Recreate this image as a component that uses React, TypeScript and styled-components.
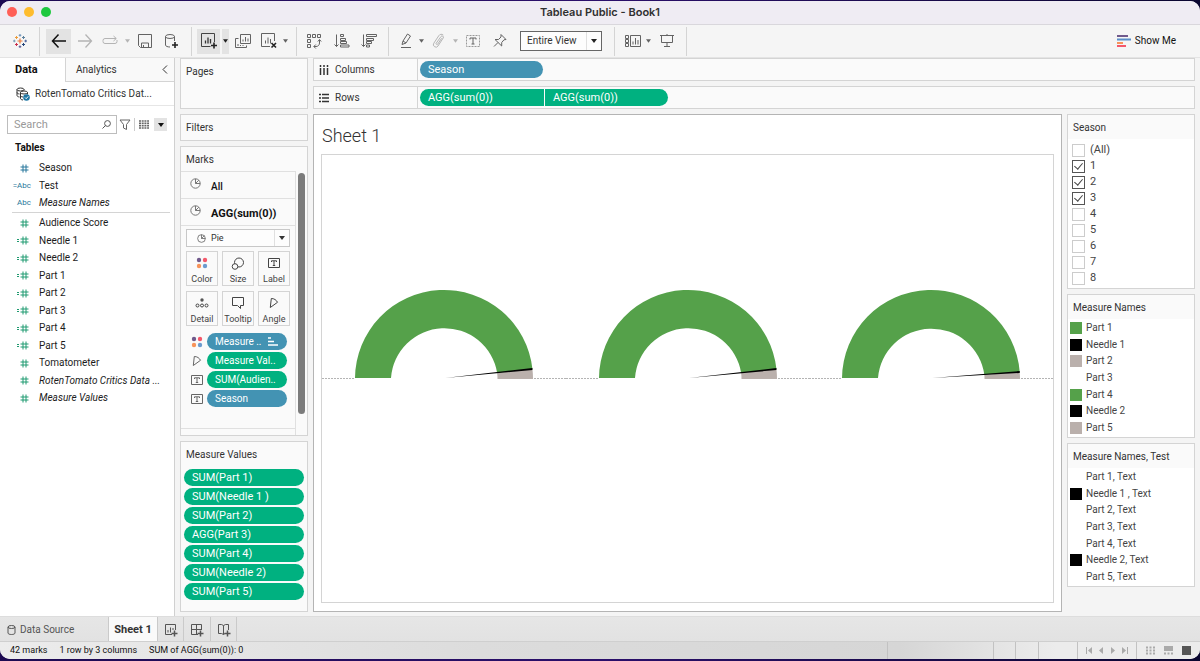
import React from "react";
import styled, { createGlobalStyle, css } from "styled-components";

const color = {
  ink: "#333",
  line: "#d4d4d4",
  card: "#fafafa",
  work: "#f4f4f4",
  blue: "#4393b3",
  green: "#00b180",
  part: "#55a14a",
  taupe: "#bab0ac",
};

const GlobalStyle = createGlobalStyle`
  * { box-sizing: border-box; }
  body {
    margin: 0;
    background: linear-gradient(90deg, #1d0a52, #2b0f6b 50%, #0a0630);
    color: ${color.ink};
    font: 10px/16px Roboto, "Liberation Sans", sans-serif;
  }
  button, input, select { font: inherit; color: inherit; }
  button { padding: 0; border: 0; background: none; }
  h1, h2, ul { margin: 0; padding: 0; font-weight: 400; font-size: inherit; }
  ul { list-style: none; }
  svg { display: block; flex: none; }
`;

const Window = styled.div`
  display: flex;
  flex-direction: column;
  min-height: calc(100vh - 3px);
  margin: 1px 0 2px;
  border-radius: 10px;
  overflow: hidden;
  background: ${color.work};
`;

const TitleBar = styled.header`
  display: grid;
  grid-template-columns: 1fr auto 1fr;
  align-items: center;
  height: 24px;
  padding: 0 7px 1px;
  background: #efecf3;
  border-bottom: 1px solid #d9d7dc;
  h1 {
    font: 600 11px/16px Inter, sans-serif;
    color: #303030;
  }
`;
const Lights = styled.div`
  display: flex;
  gap: 7px;
`;
const Light = styled.button<{ $c: string }>`
  width: 10px;
  height: 10px;
  border-radius: 50%;
  background: ${(p) => p.$c};
`;

/* Toolbar */
const Toolbar = styled.div`
  display: flex;
  align-items: center;
  height: 33px;
  border-bottom: 1px solid #e4e4e4;
  background: #f5f5f5;
`;
const Group = styled.div<{ $l?: number; $r?: number }>`
  display: flex;
  align-items: center;
  height: 29px;
  padding: 0 ${(p) => p.$r ?? 6}px 0 ${(p) => p.$l ?? 5}px;
  border-right: 1px solid #d4d4d4;
`;
const Tool = styled.button<{ $w?: number; $on?: boolean; $dim?: boolean; $gap?: number }>`
  display: flex;
  align-items: center;
  justify-content: center;
  width: ${(p) => p.$w ?? 28}px;
  height: 25px;
  margin-left: ${(p) => p.$gap ?? 0}px;
  background: ${(p) => (p.$on ? "#e3e3e3" : "none")};
  color: ${(p) => (p.$dim ? "#b4b4b4" : "#636363")};
`;
const ShowMe = styled.button`
  display: flex;
  align-items: center;
  gap: 4px;
  margin: 0 24px 0 auto;
  color: #111;
`;

const Picker = styled.label<{ $h: number; $strong?: boolean }>`
  display: grid;
  grid-template-columns: 1fr 15px;
  align-items: center;
  height: ${(p) => p.$h}px;
  border: 1px solid ${(p) => (p.$strong ? "#666" : "#c8c8c8")};
  background: #fdfdfd;
  ${(p) => p.$strong && css`width: 82px;`}
  select {
    grid-area: 1 / 1 / 2 / 3;
    width: 100%;
    height: 100%;
    border: 0;
    padding: 0 0 0 ${(p) => (p.$strong ? 6 : 24)}px;
    appearance: none;
    background: none;
    font-size: ${(p) => (p.$strong ? 10 : 9)}px;
  }
`;
const PickerCaret = styled.span`
  grid-area: 1 / 2;
  display: flex;
  align-items: center;
  justify-content: center;
  height: 100%;
  border-left: 1px solid #e0e0e0;
  pointer-events: none;
`;
const PickerIcon = styled.span`
  grid-area: 1 / 1;
  padding-left: 10px;
  color: #666;
  pointer-events: none;
`;

/* Workspace */
const Workspace = styled.main`
  display: flex;
  flex: 1;
`;

const DataPane = styled.aside`
  flex: none;
  width: 175px;
  border-right: 1px solid #d0d0d0;
  background: #fff;
`;
const PaneTabs = styled.div`
  display: flex;
  height: 24px;
`;
const PaneTab = styled.button<{ $active?: boolean }>`
  display: flex;
  align-items: center;
  ${(p) =>
    p.$active
      ? css`
          width: 65px;
          padding-left: 15px;
          font-weight: 700;
          font-size: 11px;
          color: #111;
        `
      : css`
          flex: 1;
          justify-content: space-between;
          padding: 0 6px 0 10px;
          border-left: 1px solid ${color.line};
          border-bottom: 1px solid ${color.line};
          background: #f9f9f9;
        `}
`;
const Source = styled.button`
  display: flex;
  align-items: center;
  gap: 5px;
  width: 100%;
  height: 24px;
  padding-left: 16px;
  border-bottom: 1px solid #e6e6e6;
`;
const SearchRow = styled.div`
  display: flex;
  align-items: center;
  height: 19px;
  margin: 9px 7px 0;
`;
const SearchBox = styled.label`
  display: flex;
  align-items: center;
  width: 110px;
  height: 19px;
  padding: 0 5px 0 6px;
  border: 1px solid #bdbdbd;
  color: #555;
  input {
    flex: 1;
    min-width: 0;
    padding: 0;
    border: 0;
    outline: 0;
    background: none;
    font-size: 11px;
    &::placeholder { color: #999; }
  }
`;
const SearchTool = styled.button<{ $w: number; $rule?: boolean; $fill?: boolean }>`
  display: flex;
  align-items: center;
  justify-content: center;
  width: ${(p) => p.$w}px;
  height: 13px;
  border-right: ${(p) => (p.$rule ? "1px solid #ccc" : "0")};
  background: ${(p) => (p.$fill ? "#e3e3e3" : "none")};
  color: #666;
`;
const TablesTitle = styled.h2`
  padding: 6px 15px 3px;
  font-weight: 700;
  color: #111;
`;
const FieldList = styled.ul`
  margin: 0 4px 0 12px;
  color: #1c1c1c;
  & + & {
    padding-top: 1px;
    border-top: 1px solid ${color.line};
  }
`;
const Field = styled.li<{ $it?: boolean }>`
  display: flex;
  align-items: center;
  height: 17px;
  white-space: nowrap;
  font-style: ${(p) => (p.$it ? "italic" : "normal")};
  &:nth-child(odd) { height: 18px; }
`;
const FieldIcon = styled.span<{ $c: string }>`
  display: flex;
  align-items: center;
  justify-content: flex-end;
  width: 19px;
  margin: 0 8px 0 0;
  padding-right: ${(p) => (p.$c === "abc" ? 0 : 2)}px;
  font-size: 8px;
  font-style: normal;
  color: ${(p) => (p.$c === "green" ? "#1f9a70" : "#27779b")};
`;

const Cards = styled.div`
  display: flex;
  flex: none;
  flex-direction: column;
  gap: 5px;
  width: 128px;
  margin: 0 5px 4px;
`;
const Card = styled.section<{ $h?: number; $grow?: boolean }>`
  ${(p) => p.$h && css`min-height: ${p.$h}px;`}
  ${(p) => p.$grow && css`flex: 1;`}
  border: 1px solid ${color.line};
  background: ${color.card};
`;
const CardTitle = styled.h2`
  padding: 5px 5px 3px;
  line-height: 16px;
`;
const MarksBody = styled.div`
  display: flex;
  height: 264px;
`;
const MarksMain = styled.div`
  flex: 1;
  height: 258px;
  border-top: 1px solid #e0e0e0;
  border-bottom: 1px solid #e0e0e0;
`;
const ScrollTrack = styled.div`
  width: 12px;
  padding: 2px 2px 0;
  border-left: 1px solid #e0e0e0;
  &::before {
    content: "";
    display: block;
    width: 7px;
    height: 241px;
    border-radius: 4px;
    background: #7b7b7b;
  }
`;
const MarkLayer = styled.button<{ $bold?: boolean }>`
  display: flex;
  align-items: center;
  gap: 10px;
  width: 100%;
  height: 27px;
  padding-left: 9px;
  border-bottom: 1px solid #e0e0e0;
  font-weight: ${(p) => (p.$bold ? 700 : 500)};
  font-size: ${(p) => (p.$bold ? 11 : 10)}px;
  color: #111;
  svg { color: #777; margin-bottom: 4px; }
  span { padding-top: 3px; }
`;
const MarkControls = styled.div`
  display: flex;
  flex-direction: column;
  gap: 4px;
  padding: 3px 5px 0;
`;
const MarkGrid = styled.div`
  display: grid;
  grid-template-columns: repeat(3, 1fr);
  gap: 5px 4px;
`;
const MarkButton = styled.button`
  display: flex;
  flex-direction: column;
  align-items: center;
  justify-content: space-between;
  height: 35px;
  padding: 5px 0 0;
  border: 1px solid ${color.line};
  font-size: 9px;
  line-height: 11px;
  color: #444;
`;
const Encodings = styled.ul`
  display: flex;
  flex-direction: column;
  gap: 2px;
  padding: 7px 0 0 10px;
`;
const Encoding = styled.li`
  display: grid;
  grid-template-columns: 16px 80px;
  align-items: center;
  svg { color: #666; }
`;
const Pill = styled.button<{ $blue?: boolean; $w?: number; $join?: "left" | "right" }>`
  display: flex;
  align-items: center;
  justify-content: space-between;
  width: ${(p) => (p.$w ? p.$w + "px" : "100%")};
  height: 17px;
  padding: 0 9px 0 8px;
  border-radius: ${(p) =>
    p.$join === "left" ? "9px 0 0 9px" : p.$join === "right" ? "0 9px 9px 0" : "9px"};
  background: ${(p) => (p.$blue ? color.blue : color.green)};
  color: #fff;
  white-space: nowrap;
  svg { color: #fff; }
`;
const ValueList = styled.ul`
  display: flex;
  flex-direction: column;
  gap: 2px;
  padding: 3px;
  font-size: 11px;
`;

const Stage = styled.div`
  display: flex;
  flex: 1;
  flex-direction: column;
  gap: 5px;
  min-width: 0;
  margin: 0 5px 4px 0;
`;
const Shelf = styled.div`
  display: flex;
  align-items: center;
  height: 23px;
  border: 1px solid ${color.line};
  background: ${color.card};
`;
const ShelfName = styled.div`
  display: flex;
  align-items: center;
  gap: 6px;
  width: 104px;
  height: 100%;
  padding-left: 5px;
  border-right: 1px solid ${color.line};
`;
const ShelfPills = styled.div`
  display: flex;
  gap: 1px;
  padding-left: 2px;
  font-size: 11px;
`;
const StageBody = styled.div`
  display: flex;
  flex: 1;
  gap: 5px;
`;
const Sheet = styled.section`
  display: flex;
  flex: 1;
  flex-direction: column;
  padding: 8px 7px;
  border: 1px solid #b4b4b4;
  background: #fff;
  h2 {
    height: 31px;
    padding-left: 1px;
    font: 300 18px/26px Roboto, sans-serif;
    color: #333;
  }
`;
const View = styled.div`
  display: grid;
  grid-template-columns: repeat(3, 1fr);
  flex: 1;
  border: 1px solid #d4d4d4;
`;
const Pane = styled.div`
  display: flex;
  align-items: center;
  &::before,
  &::after {
    content: "";
    flex: 1;
    height: 1px;
    background: repeating-linear-gradient(90deg, #b4b4b4 0 2px, #fff 2px 3px);
  }
`;

const Side = styled.aside`
  display: flex;
  flex: none;
  flex-direction: column;
  gap: 5px;
  width: 128px;
`;
const Filter = styled.ul`
  padding: 3px 4px 2px;
  background: #fff;
`;
const Option = styled.label`
  display: flex;
  align-items: center;
  gap: 5px;
  height: 16px;
  font-size: 11px;
  color: #444;
  input {
    appearance: none;
    display: grid;
    place-items: center;
    width: 13px;
    height: 13px;
    margin: 0;
    border: 1px solid #ccc;
    background: #fff;
  }
  input:checked { border-color: #555; }
  input:checked::after {
    content: "";
    width: 4px;
    height: 7px;
    margin-bottom: 2px;
    border: solid #444;
    border-width: 0 1px 1px 0;
    transform: rotate(40deg);
  }
`;
const Legend = styled.ul`
  padding: 0 2px 1px;
  background: #fff;
`;
const LegendItem = styled.li<{ $c?: string }>`
  display: flex;
  align-items: center;
  gap: 4px;
  height: 17px;
  color: #444;
  &:nth-child(3n) { height: 16px; }
  &::before {
    content: "";
    width: 12px;
    height: 12px;
    background: ${(p) => p.$c ?? "none"};
  }
`;

/* Bottom bars */
const SheetTabs = styled.nav`
  display: flex;
  height: 26px;
  border-top: 1px solid #ddd;
  border-bottom: 1px solid #cfcfcf;
  background: linear-gradient(#e6e6e6, #e2e2e2);
`;
const SheetTab = styled.button<{ $w: number; $active?: boolean }>`
  display: flex;
  align-items: center;
  justify-content: ${(p) => (p.$w > 60 ? "flex-start" : "center")};
  gap: 4px;
  width: ${(p) => p.$w}px;
  padding: 2px ${(p) => (p.$w > 60 ? 7 : 0)}px 0;
  border-right: 1px solid #cacaca;
  background: ${(p) => (p.$active ? "#fafafa" : "none")};
  font-size: ${(p) => (p.$active ? 11 : 10)}px;
  font-weight: ${(p) => (p.$active ? 700 : 400)};
  color: ${(p) => (p.$active ? "#333" : "#555")};
`;
const Status = styled.footer`
  display: flex;
  height: 17px;
  padding-left: 10px;
  background: linear-gradient(90deg, #ececec, #dcdcdc 40%, #d6d6d6 75%, #ececec 88%);
  font-size: 9px;
  line-height: 17px;
  color: #111;
`;
const Note = styled.span`
  margin-right: 12px;
`;
const Cell = styled.div<{ $w: number; $first?: boolean }>`
  display: flex;
  align-items: center;
  justify-content: space-evenly;
  width: ${(p) => p.$w}px;
  margin-left: ${(p) => (p.$first ? "auto" : 0)};
  border-left: 1px solid #c2c2c2;
  color: #aaa;
`;

/* Drawings */
const Draw = ({ w = 16, h = 16, children }: { w?: number; h?: number; children: React.ReactNode }) => (
  <svg width={w} height={h} viewBox={`0 0 ${w} ${h}`} fill="none" stroke="currentColor" aria-hidden="true">
    {children}
  </svg>
);
const Caret = ({ w = 5, c = "currentColor" }: { w?: number; c?: string }) => (
  <svg width={w} height="4" viewBox="0 0 6 4" aria-hidden="true">
    <path d="M0 0h6L3 4z" fill={c} />
  </svg>
);
const Pie = ({ s = 11 }: { s?: number }) => (
  <svg width={s} height={s} viewBox="0 0 11 11" fill="none" stroke="currentColor" aria-hidden="true">
    <circle cx="5.5" cy="5.5" r="4.7" />
    <path d="M5.5.8v4.7h4.7M5.5 5.5l3.3-3.3" />
  </svg>
);
const Dots = () => (
  <svg width="12" height="12" viewBox="0 0 12 12" aria-hidden="true">
    <circle cx="3" cy="3" r="2.2" fill="#705a8c" />
    <circle cx="9" cy="3" r="2.2" fill="#f4586a" />
    <circle cx="3" cy="9" r="2.2" fill="#f7935a" />
    <circle cx="9" cy="9" r="2.2" fill="#6b9bcf" />
  </svg>
);
const TextBox = () => (
  <Draw w={12} h={12}>
    <path d="M.5 1.5h11v9H.5z" />
    <path d="M3.5 5V3.8h5V5M6 3.8v4.7M4.8 8.5h2.4" />
  </Draw>
);
const Angle = () => (
  <Draw w={12} h={12}>
    <path d="M3.3 1.5l-1 9 7.2-5.200c-1.200-2.400-3.400-3.800-6.200-3.800z" />
  </Draw>
);
const Hash = ({ calc }: { calc?: boolean }) => (
  <Draw w={12} h={9}>
    <path d="M6 .5v8M9 .5v8M3.500 3h8M3.500 6h8" />
    {calc && <path d="M0 3.500h2M0 5.500h2" />}
  </Draw>
);
const Bars = "M4.500 10.500V7.500M7 10.500V4.500M9.500 10.500V6";
const Plus = ({ x, y }: { x: number; y: number }) => (
  <path d={`M${x - 3} ${y}h6M${x} ${y - 3}v6`} stroke="#222" strokeWidth="1.6" />
);
const Logo = () => (
  <Draw w={14} h={14}>
    <path d="M7 4.500v5M4.500 7h5" stroke="#eb7b3a" strokeWidth="1.2" />
    <path d="M3.500 2v3M2 3.500h3" stroke="#eb9c3a" />
    <path d="M10.500 2v3M9 3.500h3" stroke="#5b7f9b" />
    <path d="M3.500 9v3M2 10.500h3" stroke="#c9304d" />
    <path d="M10.500 9v3M9 10.500h3" stroke="#27467a" />
    <path d="M7 0v2.600M5.700 1.300h2.600" stroke="#6c93b8" />
    <path d="M7 11.400V14M5.700 12.700h2.600" stroke="#5b5b95" />
    <path d="M1.300 5.700v2.600M0 7h2.600" stroke="#7a9bb5" />
    <path d="M12.700 5.700v2.600M11.400 7H14" stroke="#4a5f98" />
  </Draw>
);

const Gauge = ({ drop }: { drop: number }) => {
  const dx = Math.sqrt(89 * 89 - drop * drop);
  const k = 53.5 / 89;
  return (
    <svg width="180" height="180" viewBox="0 0 180 180" role="img" aria-label="Gauge">
      <path
        d={`M1 89A89 89 0 0 1 ${90 + dx} ${90 - drop}L${90 + dx * k} ${90 - drop * k}A53.500 53.500 0 0 0 37 89z`}
        fill={color.part}
      />
      <path
        d={`M${90 + dx} ${90 - drop}A89 89 0 0 1 179 90H143.500A53.500 53.500 0 0 0 ${90 + dx * k} ${90 - drop * k}z`}
        fill={color.taupe}
      />
      <path d={`M91 89L${90 + dx} ${89 - drop}v2z`} fill="#000" />
    </svg>
  );
};

const dims: [string, string, boolean?][] = [
  ["hash", "Season"],
  ["=Abc", "Test"],
  ["Abc", "Measure Names", true],
];
const measures: [boolean, string, boolean?][] = [
  [false, "Audience Score"],
  [true, "Needle 1"],
  [true, "Needle 2"],
  [true, "Part 1"],
  [true, "Part 2"],
  [true, "Part 3"],
  [true, "Part 4"],
  [true, "Part 5"],
  [false, "Tomatometer"],
  [false, "RotenTomato Critics Data ...", true],
  [false, "Measure Values", true],
];
const values = ["SUM(Part 1)", "SUM(Needle 1 )", "SUM(Part 2)", "AGG(Part 3)", "SUM(Part 4)", "SUM(Needle 2)", "SUM(Part 5)"];
const seasons = ["(All)", "1", "2", "3", "4", "5", "6", "7", "8"];
const names: [string, string?][] = [
  ["Part 1", color.part],
  ["Needle 1", "#000"],
  ["Part 2", color.taupe],
  ["Part 3"],
  ["Part 4", color.part],
  ["Needle 2", "#000"],
  ["Part 5", color.taupe],
];
const testNames: [string, string?][] = [
  ["Part 1, Text"],
  ["Needle 1 , Text", "#000"],
  ["Part 2, Text"],
  ["Part 3, Text"],
  ["Part 4, Text"],
  ["Needle 2, Text", "#000"],
  ["Part 5, Text"],
];

const TopTools = () => (
  <Toolbar>
    <Group $l={6} $r={5}>
      <Tool aria-label="Start page"><Logo /></Tool>
    </Group>
    <Group $l={6}>
      <Tool $w={25} $on aria-label="Back">
        <Draw><path d="M15 8H1.500M7.500 1.500L1.500 8l6 6.500" stroke="#111" strokeWidth="1.500" /></Draw>
      </Tool>
      <Tool $dim aria-label="Forward">
        <Draw><path d="M1 8h13.500M8.500 1.500l6 6.500-6 6.500" strokeWidth="1.300" /></Draw>
      </Tool>
      <Tool $w={22} $dim aria-label="Replay">
        <Draw><path d="M5 10.500H3A2 2 0 0 1 1 8.500v-1a2 2 0 0 1 2-2h11M11.500 3l2.800 2.500L11.500 8M15 7v1.500a2 2 0 0 1-2 2H5" /></Draw>
      </Tool>
      <Tool $w={12} $dim aria-label="Replay options"><Caret /></Tool>
      <Tool $w={24} aria-label="Save">
        <Draw><path d="M1.500 1.500h13v13h-11l-2-2zM4.500 14v-4h7v4M6.500 14v-2" /></Draw>
      </Tool>
      <Tool aria-label="New data source">
        <Draw>
          <ellipse cx="7" cy="3.500" rx="4.500" ry="2" />
          <path d="M2.500 3.500v8.500c0 1.200 2 2 4.500 2M11.500 3.500V8" />
          <Plus x={12} y={12} />
        </Draw>
      </Tool>
    </Group>
    <Group $r={7}>
      <Tool $w={23} $on aria-label="New worksheet">
        <Draw>
          <path d="M9.500 13.500h-9v-13h13V9" stroke="#444" />
          <path d={Bars} stroke="#333" strokeWidth="1.300" />
          <Plus x={13} y={12.5} />
        </Draw>
      </Tool>
      <Tool $w={7} $gap={2} $on aria-label="New options"><Caret c="#222" /></Tool>
      <Tool aria-label="Duplicate">
        <Draw>
          <path d="M5.500 1.500h10v9h-10z" />
          <path d="M8 8.500V6.500M10.500 8.500V4M13 8.500V5.500" />
          <path d="M3.500 5.500h-3v9h11v-2M3 13v-2M5.500 13v-1M8 13v-1" />
        </Draw>
      </Tool>
      <Tool $w={24} aria-label="Clear sheet">
        <Draw>
          <path d="M9 13.500H.500v-13h13V8" />
          <path d={Bars} />
          <path d="M10.500 10l4.500 4.500M15 10l-4.500 4.500" stroke="#222" strokeWidth="1.600" />
        </Draw>
      </Tool>
      <Tool $w={8} aria-label="Clear options"><Caret /></Tool>
    </Group>
    <Group $l={3}>
      <Tool aria-label="Swap rows and columns">
        <Draw>
          <path d="M1.500 1.500h3v3h-3zM6.500 1.500h3v3h-3zM11.500 1.500h3v3h-3zM1.500 6.500h3v3h-3zM1.500 11.500h3v3h-3z" />
          <path d="M13.500 7v3c0 2-1.500 3.500-3.500 3.500H8M11.800 8.500l1.700-2 1.700 2M9.800 11.500l-2 2 2 2" />
        </Draw>
      </Tool>
      <Tool aria-label="Sort ascending">
        <Draw>
          <path d="M2.500 1.500v12M.5 11.500l2 2 2-2M6.500 1.500h3v2h-3zM6.500 5.500h5v2h-5zM6.500 8.500h6v2h-6zM6.500 12h8.500v2H6.500z" />
        </Draw>
      </Tool>
      <Tool $w={26} aria-label="Sort descending">
        <Draw>
          <path d="M2.500 1.500v12M.5 11.500l2 2 2-2M5.500 1.500h10v2h-10zM5.500 5.500h7v2h-7zM5.500 8.500h5v2h-5zM5.500 12h3v2h-3z" />
        </Draw>
      </Tool>
    </Group>
    <Group $r={12}>
      <Tool $w={24} aria-label="Highlight">
        <Draw><path d="M4 11.500l1-3.500 4.500-7 3 2-4.500 7zM5 8l3 2M3 14.500h10" /></Draw>
      </Tool>
      <Tool $w={6} aria-label="Highlight options"><Caret /></Tool>
      <Tool $dim aria-label="Group members">
        <Draw><path d="M6 10.500l5-7a1.300 1.300 0 0 1 2.200 1.500L8 13a2.500 2.500 0 0 1-4.200-2.800l5-7.500a3 3 0 0 1 4.500-.7M6 10.500a1 1 0 0 0 1.600.8l4-6" /></Draw>
      </Tool>
      <Tool $w={6} $dim aria-label="Group options"><Caret /></Tool>
      <Tool $w={30} aria-label="Show mark labels">
        <Draw>
          <path d="M1.500 2.500h13v11h-13z" strokeDasharray="2 1" stroke="#999" />
          <path d="M5 6.500v-1.500h6v1.500M8 5v6M6.500 11h3" />
        </Draw>
      </Tool>
      <Tool $w={24} aria-label="Fix axes">
        <Draw><path d="M9 1.500l5 5-2 .3-2.300 2.700v3.500L3 6.500h3.500L9 4zM6 9.500L2 13.500" /></Draw>
      </Tool>
      <Tool as="span" $w={8} />
      <Picker $h={20} $strong>
        <select aria-label="Fit" defaultValue="Entire View"><option>Entire View</option></select>
        <PickerCaret><Caret w={6} c="#222" /></PickerCaret>
      </Picker>
    </Group>
    <Group $r={3} $l={6}>
      <Tool $w={24} aria-label="Show or hide cards">
        <Draw w={18}>
          <path d="M1.500 2.500h3v3h-3zM1.500 6.500h3v3h-3zM1.500 10.500h3v3h-3zM6.500 2.500h10v11h-10z" />
          <path d="M9 11.500V8.500M11.500 11.500V5M14 11.500V7" />
        </Draw>
      </Tool>
      <Tool $w={6} aria-label="Card options"><Caret /></Tool>
      <Tool $w={32} aria-label="Presentation mode">
        <Draw><path d="M1 2.500h14M2.500 2.500v7h11v-7M8 9.500v4M5 13.500h6M8 1v1" /></Draw>
      </Tool>
    </Group>
    <ShowMe>
      <Draw w={14} h={12}>
        <path d="M0 1h11" stroke="#705a8c" strokeWidth="2" />
        <path d="M0 4.500h14" stroke="#5b8fc9" strokeWidth="2" />
        <path d="M0 8h6" stroke="#f7935a" strokeWidth="2" />
        <path d="M0 11h9" stroke="#f4586a" strokeWidth="2" />
      </Draw>
      Show Me
    </ShowMe>
  </Toolbar>
);

const MarksCard = () => (
  <Card>
    <CardTitle>Marks</CardTitle>
    <MarksBody>
      <MarksMain>
        <MarkLayer><Pie /><span>All</span></MarkLayer>
        <MarkLayer $bold><Pie /><span>AGG(sum(0))</span></MarkLayer>
        <MarkControls>
          <Picker $h={18}>
            <PickerIcon><Pie s={9} /></PickerIcon>
            <select aria-label="Mark type" defaultValue="Pie"><option>Pie</option></select>
            <PickerCaret><Caret w={6} /></PickerCaret>
          </Picker>
          <MarkGrid>
            <MarkButton><Dots />Color</MarkButton>
            <MarkButton>
              <Draw w={14} h={14}><circle cx="8" cy="5.500" r="4.500" /><circle cx="4" cy="9.500" r="2.800" fill={color.card} /></Draw>
              Size
            </MarkButton>
            <MarkButton><TextBox />Label</MarkButton>
            <MarkButton>
              <Draw w={14} h={12}>
                <circle cx="7" cy="3" r="1.700" fill="#555" stroke="none" />
                <circle cx="2.500" cy="8.500" r="1.500" /><circle cx="7" cy="8.500" r="1.500" /><circle cx="11.500" cy="8.500" r="1.500" />
              </Draw>
              Detail
            </MarkButton>
            <MarkButton><Draw w={14} h={12}><path d="M1.500.500h11v8H9.500v3L6.500 8.500h-5z" /></Draw>Tooltip</MarkButton>
            <MarkButton><Angle />Angle</MarkButton>
          </MarkGrid>
        </MarkControls>
        <Encodings>
          <Encoding>
            <Dots />
            <Pill $blue>
              Measure ..
              <Draw w={10} h={9}><path d="M0 1h3M0 4.500h6M0 8h10" strokeWidth="1.500" /></Draw>
            </Pill>
          </Encoding>
          <Encoding><Angle /><Pill>Measure Val..</Pill></Encoding>
          <Encoding><TextBox /><Pill>SUM(Audien..</Pill></Encoding>
          <Encoding><TextBox /><Pill $blue>Season</Pill></Encoding>
        </Encodings>
      </MarksMain>
      <ScrollTrack />
    </MarksBody>
  </Card>
);

export default function App() {
  return (
    <>
      <GlobalStyle />
      <Window>
        <TitleBar>
          <Lights>
            <Light $c="#ff5f57" aria-label="Close" />
            <Light $c="#febc2e" aria-label="Minimize" />
            <Light $c="#1fc83f" aria-label="Zoom" />
          </Lights>
          <h1>Tableau Public - Book1</h1>
        </TitleBar>
        <TopTools />
        <Workspace>
          <DataPane>
            <PaneTabs>
              <PaneTab $active>Data</PaneTab>
              <PaneTab>
                Analytics
                <Draw w={6} h={9}><path d="M5 .500l-4 4 4 4" /></Draw>
              </PaneTab>
            </PaneTabs>
            <Source>
              <Draw w={14} h={14}>
                <ellipse cx="4.500" cy="2.500" rx="3.500" ry="1.500" />
                <path d="M1 2.500v6c0 .8 1 1.300 2.500 1.500M1 5.500c0 .8 1 1.300 2.500 1.500M8 2.500v1" />
                <ellipse cx="8" cy="5.500" rx="3.500" ry="1.500" />
                <path d="M4.500 5.500v6c0 .8 1 1.300 2.500 1.500M11.500 5.500v2M4.500 8.500c0 .8 1 1.300 2.500 1.500" />
                <circle cx="10.500" cy="10.500" r="3.300" fill="#1f77a4" stroke="none" />
                <path d="M9 10.500l1.200 1.200 2-2.300" stroke="#fff" />
              </Draw>
              RotenTomato Critics Dat...
            </Source>
            <SearchRow>
              <SearchBox>
                <input type="search" placeholder="Search" aria-label="Search fields" />
                <Draw w={9} h={9}><circle cx="5.500" cy="3.500" r="2.900" /><path d="M3.500 5.500L.5 8.500" /></Draw>
              </SearchBox>
              <SearchTool $w={18} $rule aria-label="Filter fields">
                <Draw w={12} h={12}><path d="M1 1h10L7.500 5.500v5l-3-1.500V5.500z" /></Draw>
              </SearchTool>
              <SearchTool $w={20} aria-label="View">
                <Draw w={10} h={9}><path d="M0 1h10M0 3.300h10M0 5.600h10M0 8h10" strokeDasharray="2 .700" strokeWidth="1.600" /></Draw>
              </SearchTool>
              <SearchTool $w={13} $fill aria-label="Field options"><Caret w={6} c="#111" /></SearchTool>
            </SearchRow>
            <TablesTitle>Tables</TablesTitle>
            <FieldList>
              {dims.map(([icon, name, it]) => (
                <Field key={name} $it={it}>
                  <FieldIcon $c={icon === "hash" ? "blue" : "abc"}>{icon === "hash" ? <Hash /> : icon}</FieldIcon>
                  {name}
                </Field>
              ))}
            </FieldList>
            <FieldList>
              {measures.map(([calc, name, it]) => (
                <Field key={name} $it={it}>
                  <FieldIcon $c="green"><Hash calc={calc} /></FieldIcon>
                  {name}
                </Field>
              ))}
            </FieldList>
          </DataPane>
          <Cards>
            <Card $h={51}><CardTitle>Pages</CardTitle></Card>
            <Card $h={27}><CardTitle>Filters</CardTitle></Card>
            <MarksCard />
            <Card $grow>
              <CardTitle>Measure Values</CardTitle>
              <ValueList>
                {values.map((v) => <li key={v}><Pill>{v}</Pill></li>)}
              </ValueList>
            </Card>
          </Cards>
          <Stage>
            <Shelf>
              <ShelfName>
                <Draw w={10} h={10}><path d="M1.500 0v2M5 0v2M8.500 0v2M1.500 3v7M5 3v7M8.500 3v7" strokeWidth="1.500" /></Draw>
                Columns
              </ShelfName>
              <ShelfPills><Pill $blue $w={123}>Season</Pill></ShelfPills>
            </Shelf>
            <Shelf>
              <ShelfName>
                <Draw w={10} h={10}><path d="M0 1.500h2M0 5h2M0 8.500h2M3 1.500h7M3 5h7M3 8.500h7" strokeWidth="1.300" /></Draw>
                Rows
              </ShelfName>
              <ShelfPills>
                <Pill $w={124} $join="left">AGG(sum(0))</Pill>
                <Pill $w={123} $join="right">AGG(sum(0))</Pill>
              </ShelfPills>
            </Shelf>
            <StageBody>
              <Sheet>
                <h2>Sheet 1</h2>
                <View>
                  <Pane><Gauge drop={10} /></Pane>
                  <Pane><Gauge drop={10} /></Pane>
                  <Pane><Gauge drop={7} /></Pane>
                </View>
              </Sheet>
              <Side>
                <Card>
                  <CardTitle>Season</CardTitle>
                  <Filter>
                    {seasons.map((s) => (
                      <li key={s}>
                        <Option><input type="checkbox" defaultChecked={"123".includes(s)} />{s}</Option>
                      </li>
                    ))}
                  </Filter>
                </Card>
                <Card>
                  <CardTitle>Measure Names</CardTitle>
                  <Legend>{names.map(([n, c]) => <LegendItem key={n} $c={c}>{n}</LegendItem>)}</Legend>
                </Card>
                <Card>
                  <CardTitle>Measure Names, Test</CardTitle>
                  <Legend>{testNames.map(([n, c]) => <LegendItem key={n} $c={c}>{n}</LegendItem>)}</Legend>
                </Card>
              </Side>
            </StageBody>
          </Stage>
        </Workspace>
        <SheetTabs>
          <SheetTab $w={109}>
            <Draw w={9} h={10}><ellipse cx="4.500" cy="2" rx="3.500" ry="1.500" /><path d="M1 2v6c0 2 7 2 7 0V2" /></Draw>
            Data Source
          </SheetTab>
          <SheetTab $w={49} $active>Sheet 1</SheetTab>
          <SheetTab $w={26} aria-label="New worksheet">
            <Draw w={14} h={14}><path d="M8 11.500H1.500v-10h10V7M4 9.500V7M6.500 9.500V4.500M9 7V5" /><path d="M7.500 10.500h6M10.500 7.500v6" strokeWidth="1.500" /></Draw>
          </SheetTab>
          <SheetTab $w={27} aria-label="New dashboard">
            <Draw w={14} h={14}><path d="M8 11.500H1.500v-10h10V7M6.500 1.500v10M1.500 6.500h10" /><path d="M7.500 10.500h6M10.500 7.500v6" strokeWidth="1.500" /></Draw>
          </SheetTab>
          <SheetTab $w={26} aria-label="New story">
            <Draw w={14} h={14}><path d="M8 10.500L6.500 11.500 4.500 10.500h-3v-9h3l2 1 2-1h3V7M6.500 2.500v9" /><path d="M7.500 10.500h6M10.500 7.500v6" strokeWidth="1.500" /></Draw>
          </SheetTab>
        </SheetTabs>
        <Status>
          <Note>42 marks</Note>
          <Note>1 row by 3 columns</Note>
          <Note>SUM of AGG(sum(0)): 0</Note>
          <Cell $first $w={106} />
          <Cell $w={22} />
          <Cell $w={23} />
          <Cell $w={39} />
          <Cell $w={59}>
            <Draw w={6} h={7}><path d="M.5 0v7" /><path d="M6 0v7L2 3.500z" fill="currentColor" stroke="none" /></Draw>
            <Draw w={4} h={7}><path d="M4 0v7L0 3.500z" fill="currentColor" stroke="none" /></Draw>
            <Draw w={4} h={7}><path d="M0 0v7l4-3.500z" fill="currentColor" stroke="none" /></Draw>
            <Draw w={6} h={7}><path d="M5.500 0v7" /><path d="M0 0v7l4-3.500z" fill="currentColor" stroke="none" /></Draw>
          </Cell>
          <Cell $w={64}>
            <Draw w={9} h={9}><path d="M0 1.500h9M0 4.500h9M0 7.500h9" strokeWidth="2" strokeDasharray="2 1.500" /></Draw>
            <Draw w={9} h={9}><path d="M0 0h9v5H0z" fill="currentColor" stroke="none" /><path d="M0 7.500h9" strokeWidth="2" strokeDasharray="2 1.500" /></Draw>
            <Draw w={9} h={9}><path d="M0 0h9v9H0z" fill="#555" stroke="none" /></Draw>
          </Cell>
        </Status>
      </Window>
    </>
  );
}
